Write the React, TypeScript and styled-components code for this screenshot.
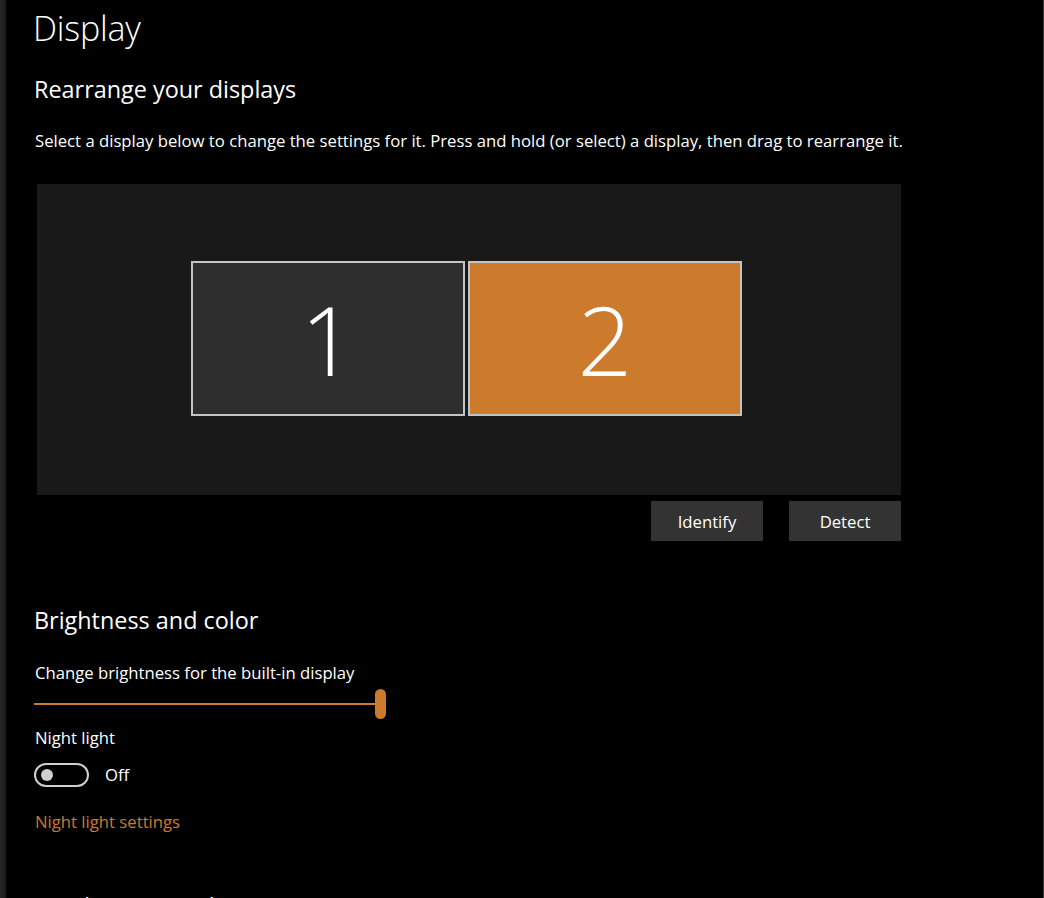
import React from "react";
import styled, { createGlobalStyle } from "styled-components";

const Global = createGlobalStyle`
  html, body { margin: 0; padding: 0; background: #000; }
  body { font-family: "Open Sans", "Noto Sans", sans-serif; color: #fff; }
`;

const Accent = "#cc7a2c";

const Window = styled.div`
  width: 1044px;
  height: 898px;
  overflow: hidden;
  display: flex;
  background: #000;
`;

const Rail = styled.div`
  width: 6px;
  flex: none;
  background: linear-gradient(to right, #262626, #1a1a1a);
`;

const Content = styled.main`
  flex: 1;
  padding: 6px 0 0 27px;
  display: flex;
  flex-direction: column;
  align-items: flex-start;
  & > * { flex-shrink: 0; }
`;

const RightEdge = styled.div`
  width: 1px;
  flex: none;
  background: #3a3a3a;
`;

const PageTitle = styled.h1`
  margin: 0;
  font-weight: 300;
  font-size: 34px;
  line-height: 44px;
  letter-spacing: -0.2px;
`;

const SectionTitle = styled.h2<{ $top: number }>`
  margin: ${(p) => p.$top}px 0 0 1px;
  font-weight: 400;
  font-size: 23.4px;
  line-height: 30px;
  white-space: nowrap;
`;

const Text = styled.p<{ $top: number }>`
  margin: ${(p) => p.$top}px 0 0 2px;
  font-size: 16.7px;
  line-height: 22px;
  color: #fff;
  white-space: nowrap;
`;

const Arrange = styled.div`
  margin: 32px 0 0 4px;
  width: 864px;
  height: 311px;
  background: #191919;
  display: flex;
  gap: 3px;
  padding: 77px 0 0 154px;
  box-sizing: border-box;
`;

const Monitor = styled.div<{ $selected?: boolean }>`
  width: 274px;
  height: 155px;
  box-sizing: border-box;
  border: 2px solid #c3c3c3;
  background: ${(p) => (p.$selected ? Accent : "#2e2e2e")};
  display: flex;
  align-items: center;
  justify-content: center;
  font-weight: 300;
  font-size: 96px;
  line-height: 1;
  color: #fff;
`;

const ButtonRow = styled.div`
  width: 864px;
  margin: 6px 0 0 4px;
  display: flex;
  justify-content: flex-end;
  gap: 26px;
`;

const Button = styled.button`
  width: 112px;
  height: 40px;
  border: none;
  background: #333333;
  color: #fff;
  font-family: "Open Sans", sans-serif;
  font-size: 16.7px;
  padding: 0;
`;

const Slider = styled.div`
  margin: 5px 0 0 1px;
  height: 30px;
  display: flex;
  align-items: center;
`;

const Track = styled.div`
  width: 346px;
  height: 2px;
  background: ${Accent};
`;

const Thumb = styled.div`
  width: 11px;
  height: 30px;
  border-radius: 6px;
  background: ${Accent};
  margin-left: -5px;
`;

const ToggleRow = styled.div`
  margin: 14px 0 0 1px;
  display: flex;
  align-items: center;
  gap: 16px;
`;

const Toggle = styled.div`
  width: 55px;
  height: 24px;
  box-sizing: border-box;
  border: 2px solid #cfcfcf;
  border-radius: 12px;
  display: flex;
  align-items: center;
  padding-left: 5px;
`;

const Knob = styled.div`
  width: 12px;
  height: 12px;
  border-radius: 50%;
  background: #cfcfcf;
`;

const ToggleLabel = styled.span`
  font-size: 16.7px;
  line-height: 22px;
`;

const Link = styled.a<{ $top: number }>`
  margin: ${(p) => p.$top}px 0 0 2px;
  font-size: 16.7px;
  line-height: 22px;
  color: ${Accent};
  text-decoration: none;
`;

export default function App() {
  return (
    <>
      <Global />
      <Window>
        <Rail />
        <Content>
          <PageTitle>Display</PageTitle>
          <SectionTitle $top={24}>Rearrange your displays</SectionTitle>
          <Text $top={26}>
            Select a display below to change the settings for it. Press and hold (or select) a display, then drag to rearrange it.
          </Text>
          <Arrange>
            <Monitor>1</Monitor>
            <Monitor $selected>2</Monitor>
          </Arrange>
          <ButtonRow>
            <Button>Identify</Button>
            <Button>Detect</Button>
          </ButtonRow>
          <SectionTitle $top={64}>Brightness and color</SectionTitle>
          <Text $top={27}>Change brightness for the built-in display</Text>
          <Slider>
            <Track />
            <Thumb />
          </Slider>
          <Text $top={8}>Night light</Text>
          <ToggleRow>
            <Toggle>
              <Knob />
            </Toggle>
            <ToggleLabel>Off</ToggleLabel>
          </ToggleRow>
          <Link $top={24}>Night light settings</Link>
          <SectionTitle $top={58}>Windows HD Color</SectionTitle>
        </Content>
        <RightEdge />
      </Window>
    </>
  );
}
